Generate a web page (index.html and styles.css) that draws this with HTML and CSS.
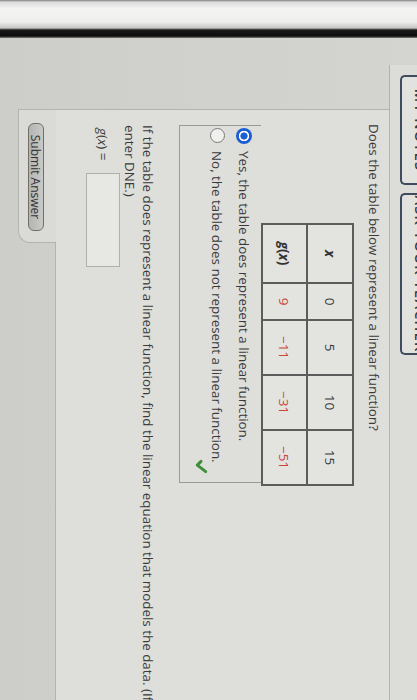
FILE: index.html
```html
<!DOCTYPE html>
<html lang="en">
<head>
<meta charset="utf-8">
<title>Linear function question</title>
<link rel="stylesheet" href="styles.css">
</head>
<body>
<div class="stage">
  <div class="bezel"></div>
  <div class="screen">
    <div class="band">
      <div class="tab tab-notes"><span>MY NOTES</span></div>
      <div class="tab tab-ask"><span>ASK YOUR TEACHER</span></div>
    </div>
    <div class="panel">
      <div class="qbody">
        <p class="q">Does the table below represent a linear function?</p>
        <table class="tbl">
          <tr class="row-x">
            <th class="c-h"><i>x</i></th>
            <td class="c-0">0</td>
            <td class="c-n">5</td>
            <td class="c-n">10</td>
            <td class="c-n">15</td>
          </tr>
          <tr class="row-g">
            <th class="c-h"><i>g</i>(<i>x</i>)</th>
            <td class="c-0 red">9</td>
            <td class="c-n red">&minus;11</td>
            <td class="c-n red">&minus;31</td>
            <td class="c-n red">&minus;51</td>
          </tr>
        </table>
        <div class="answers">
          <div class="opt"><span class="radio on"></span><span>Yes, the table does represent a linear function.</span></div>
          <div class="opt"><span class="radio"></span><span>No, the table does not represent a linear function.</span></div>
          <svg class="check" viewBox="0 0 16 16" width="15" height="15"><path d="M2.5 8.5 L6.5 12.5 L13.5 3.5" fill="none" stroke="#3f8f3a" stroke-width="3.2" stroke-linecap="round" stroke-linejoin="round"/></svg>
        </div>
        <p class="q2">If the table does represent a linear function, find the linear equation that models the data. (If the table does not represent a linear function,<br>enter DNE.)</p>
        <div class="ans-row"><span class="gx"><i>g</i>(<i>x</i>) =</span><span class="input"></span></div>
      </div>
      <div class="submitbar"><span class="btn">Submit Answer</span></div>
    </div>
  </div>
</div>
</body>
</html>
```
FILE: styles.css
```css
html, body {
  margin: 0;
  padding: 0;
  overflow: hidden;
  background: #cfcfcb;
}

body {
  width: 417px;
  height: 700px;
  font-family: "Open Sans", "DejaVu Sans", sans-serif;
  color: #3a3a3a;
}

/* the photo is sideways: the page is laid out upright, then turned a quarter clockwise */
.stage {
  width: 700px;
  height: 417px;
  display: flex;
  overflow: hidden;
  transform-origin: 0 0;
  transform: translateX(417px) rotate(90deg);
  background: #d0d0cc;
}

.bezel {
  width: 38px;
  flex: none;
  background: linear-gradient(to right, #7e7e7e 0, #dcdcdc 2px, #f4f4f3 9px, #eeeeed 22px, #c6c6c5 28px, #1a1a1a 30px, #0c0c0c 36px, #7d7d7b 38px);
}

.screen {
  flex: 1;
  display: flex;
  flex-direction: column;
  background: linear-gradient(to bottom, #d4d4d0, #cdcdc9);
}

.band {
  margin-left: 27px;
  height: 27px;
  flex: none;
  background: #dcdcd8;
  border-bottom: 1px solid #b3b3ae;
  display: flex;
  align-items: flex-start;
  overflow: hidden;
}

.tab {
  height: 15px;
  border: 2px solid #3e4c5e;
  border-top: none;
  border-radius: 0 0 5px 5px;
  background: #e2e2df;
  display: flex;
  align-items: flex-end;
  justify-content: center;
  overflow: hidden;
  font-size: 14.5px;
  font-weight: 600;
  line-height: 15px;
  color: #2e3a48;
  letter-spacing: 1.2px;
}

.tab span {
  padding-bottom: 11px;
  white-space: nowrap;
}

.tab-notes {
  margin-left: 10px;
  width: 106px;
}

.tab-ask {
  margin-left: 8px;
  width: 158px;
}

.panel {
  margin-left: 71px;
  flex: none;
  display: flex;
  flex-direction: column;
}

.qbody {
  height: 333px;
  background: #dededa;
  border-left: 1px solid #b4b4af;
  border-bottom: 1px solid #b4b4af;
  overflow: hidden;
  padding-left: 14px;
}

.q {
  margin: 6px 0 0;
  font-size: 13.4px;
  line-height: 18px;
  white-space: nowrap;
}

.tbl {
  margin: 11px 0 0 99px;
  border-collapse: collapse;
  background: #e3e3e0;
  font-size: 13.5px;
  text-align: center;
}

.tbl th, .tbl td {
  border: 2px solid #5c5c5c;
  padding: 0;
}

.tbl th {
  font-weight: 700;
  color: #333;
}

.row-x th, .row-x td { height: 44px; }
.row-g th, .row-g td { height: 43px; }

.c-h { width: 57px; }
.c-0 { width: 35px; }
.c-n { width: 53px; }

.red {
  color: #c9453d;
}

.answers {
  margin-left: 1px;
  width: 356px;
  height: 78px;
  border: 1px solid #9a9a96;
  border-top: none;
  padding-top: 3px;
  box-sizing: content-box;
  display: flex;
  flex-direction: column;
  font-size: 13.4px;
}

.opt {
  height: 27px;
  display: flex;
  align-items: center;
  padding-left: 2px;
  white-space: nowrap;
}

.radio {
  width: 15px;
  height: 15px;
  border-radius: 50%;
  box-sizing: border-box;
  border: 1.5px solid #7a7a7a;
  background: #f0f0ee;
  margin-right: 8px;
  flex: none;
}

.radio.on {
  width: 16px;
  height: 16px;
  margin-right: 7px;
  border: none;
  background: radial-gradient(circle, #1c5fd4 0 3.3px, #ffffff 3.9px 4.9px, #1c5fd4 5.5px);
}

.check {
  align-self: flex-end;
  margin: -5px 8px 0 0;
}

.q2 {
  margin: 22px 0 0 1px;
  font-size: 13.4px;
  line-height: 18px;
  white-space: nowrap;
}

.ans-row {
  margin-top: 1px;
  display: flex;
  align-items: center;
  padding-left: 4px;
}

.gx {
  font-size: 13.4px;
  width: 45px;
}

.input {
  width: 92px;
  height: 32px;
  border: 1px solid #b0b0ab;
  background: #e7e7e4;
}

.submitbar {
  width: 134px;
  height: 38px;
  margin-top: -1px;
  background: #dadad6;
  border-left: 1px solid #b4b4af;
  border-right: 1px solid #b4b4af;
  border-bottom: 1px solid #b4b4af;
  border-radius: 0 0 12px 0;
  box-sizing: border-box;
  padding: 12px 0 0 13px;
}

.btn {
  display: flex;
  align-items: center;
  justify-content: center;
  width: 108px;
  height: 16px;
  box-sizing: border-box;
  border: 1px solid #6e6e6c;
  border-radius: 6px;
  background: linear-gradient(to bottom, #c9c9c7, #b4b4b2);
  font-size: 12px;
  color: #333;
}
```
